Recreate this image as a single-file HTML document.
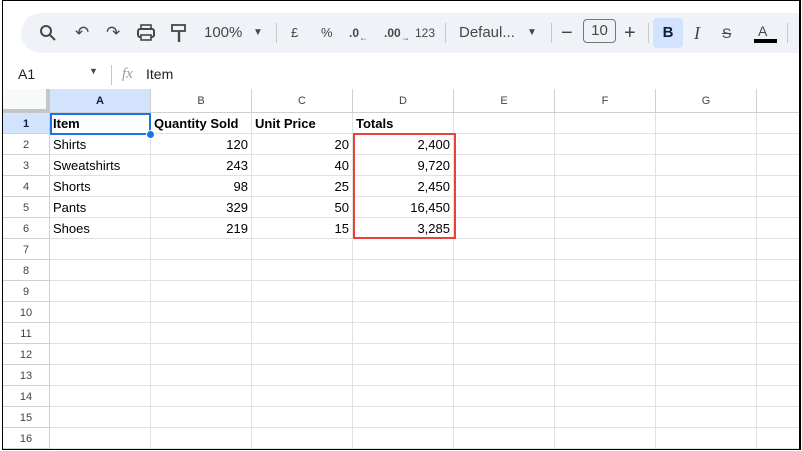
<!DOCTYPE html>
<html><head><meta charset="utf-8"><style>
*{margin:0;padding:0;box-sizing:border-box}
body{width:802px;height:451px;overflow:hidden;background:#fff;font-family:"Liberation Sans",Arial,sans-serif;position:relative}
.frame{position:absolute;left:2px;top:0;width:799px;height:450px;border:1px solid #000;border-right:2px solid #000;overflow:hidden}
.tb{position:absolute;left:18px;top:12px;width:800px;height:40px;background:#eff3f8;border-radius:20px}
.t{position:absolute;top:0;height:40px;line-height:40px;color:#444746;font-size:15px}
.sep{position:absolute;top:10px;width:1px;height:20px;background:#c7c7c7}
.fx{position:absolute;top:62px;left:0;width:800px;height:24px;font-size:14px;color:#1f1f1f}
.grid{position:absolute;left:0;top:88px}
.c{position:absolute;border-right:1px solid #e1e1e1;border-bottom:1px solid #e1e1e1;font-size:13px;color:#000;height:21px;line-height:22px;padding:0 3px;white-space:nowrap;overflow:hidden}
.h{background:#fff;color:#444;text-align:center;font-size:11px;border-color:#d0d0d0}
.r{text-align:right}
.b{font-weight:bold}
</style></head><body>
<div class="frame">
<div class="tb">
 <svg class="t" style="left:18px" width="18" height="40" viewBox="0 0 18 40"><circle cx="7" cy="18" r="5" fill="none" stroke="#444746" stroke-width="2"/><path d="M11 22l5 5" stroke="#444746" stroke-width="2"/></svg>
 <div class="t" style="left:54px;font-size:17px">↶</div>
 <div class="t" style="left:85px;font-size:17px">↷</div>
 <svg class="t" style="left:116px" width="18" height="40" viewBox="0 0 18 40"><rect x="1" y="16" width="16" height="8" rx="2" fill="none" stroke="#444746" stroke-width="2"/><rect x="4" y="12" width="10" height="4" fill="none" stroke="#444746" stroke-width="1.6"/><rect x="4" y="22" width="10" height="5" fill="#eff3f8" stroke="#444746" stroke-width="1.6"/></svg>
 <svg class="t" style="left:150px" width="16" height="40" viewBox="0 0 16 40"><rect x="1" y="12" width="13" height="6" fill="none" stroke="#444746" stroke-width="1.8"/><path d="M8 18v3M8 21v8" stroke="#444746" stroke-width="2.4"/></svg>
 <div class="t" style="left:183px">100%</div>
 <div class="t" style="left:232px;font-size:10px">▼</div>
 <div class="sep" style="left:255px"></div>
 <div class="t" style="left:270px;font-size:13px">£</div>
 <div class="t" style="left:300px;font-size:13px">%</div>
 <div class="t" style="left:328px;font-size:12px;font-weight:bold">.0<sub style="font-size:9px">←</sub></div>
 <div class="t" style="left:363px;font-size:12px;font-weight:bold">.00<sub style="font-size:9px">→</sub></div>
 <div class="t" style="left:394px;font-size:12px">123</div>
 <div class="sep" style="left:424px"></div>
 <div class="t" style="left:438px">Defaul...</div>
 <div class="t" style="left:506px;font-size:10px">▼</div>
 <div class="sep" style="left:530px"></div>
 <div class="t" style="left:540px;font-size:20px">−</div>
 <div style="position:absolute;left:562px;top:6px;width:33px;height:24px;border:1px solid #747775;border-radius:4px;text-align:center;line-height:22px;font-size:15px;color:#444746">10</div>
 <div class="t" style="left:603px;font-size:20px">+</div>
 <div class="sep" style="left:627px"></div>
 <div style="position:absolute;left:632px;top:5px;width:30px;height:30px;background:#d3e3fd;border-radius:4px;text-align:center;line-height:30px;font-weight:bold;color:#0b1f44;font-size:15px">B</div>
 <div class="t" style="left:673px;font-style:italic;font-family:'Liberation Serif',serif;font-size:18px">I</div>
 <div class="t" style="left:701px;font-size:14px;text-decoration:line-through">S</div>
 <div class="t" style="left:737px;font-size:14px;line-height:36px">A</div>
 <div style="position:absolute;left:733px;top:26px;width:23px;height:4px;background:#000"></div>
 <div class="sep" style="left:766px"></div>
</div>
<div class="fx">
 <div style="position:absolute;left:15px;top:3px">A1</div>
 <div style="position:absolute;left:86px;top:3px;font-size:9px;color:#444">▼</div>
 <div style="position:absolute;left:108px;top:2px;width:1px;height:20px;background:#c7c7c7"></div>
 <div style="position:absolute;left:119px;top:3px;color:#999;font-style:italic;font-family:'Liberation Serif',serif;font-size:15px">fx</div>
 <div style="position:absolute;left:143px;top:3px">Item</div>
</div>
<div class="grid">
<div class="c h" style="left:0;top:0;width:47px;height:24px;border-right:4px solid #c4c7c5;border-bottom:4px solid #c4c7c5;background:#f8f9fa"></div>
<div id="g"></div>
</div>
</div>
<script>
var g=document.getElementById('g'),h='';
var cx=[47,148,249,350,451,552,653,754],cols="ABCDEFGH";
for(var i=0;i<8;i++){var w=101;var st=i==0?'background:#d3e3fd;color:#0b1f44;font-weight:bold;':'';h+='<div class="c h" style="left:'+cx[i]+'px;top:0;width:'+w+'px;height:24px;line-height:24px;'+st+'">'+cols[i]+'</div>';}
var data=[["Item","Quantity Sold","Unit Price","Totals"],["Shirts","120","20","2,400"],["Sweatshirts","243","40","9,720"],["Shorts","98","25","2,450"],["Pants","329","50","16,450"],["Shoes","219","15","3,285"]];
for(var r=0;r<16;r++){var y=24+r*21;var st=r==0?'background:#d3e3fd;color:#0b1f44;font-weight:bold;':'';
h+='<div class="c h" style="left:0;top:'+y+'px;width:47px;'+st+'">'+(r+1)+'</div>';
for(var i=0;i<8;i++){var t='',cl='c';if(data[r]&&i<4){t=data[r][i];if(r==0)cl+=' b';else if(i>0)cl+=' r';}
h+='<div class="'+cl+'" style="left:'+cx[i]+'px;top:'+y+'px;width:101px">'+t+'</div>';}}
h+='<div style="position:absolute;left:47px;top:24px;width:101px;height:22px;border:2px solid #1a73e8"></div>';
h+='<div style="position:absolute;left:143px;top:41px;width:9px;height:9px;border-radius:50%;background:#1a73e8;border:1px solid #fff"></div>';
h+='<div style="position:absolute;left:350px;top:44px;width:103px;height:106px;border:2px solid #ea4335"></div>';
g.innerHTML=h;
</script>
</body></html>
